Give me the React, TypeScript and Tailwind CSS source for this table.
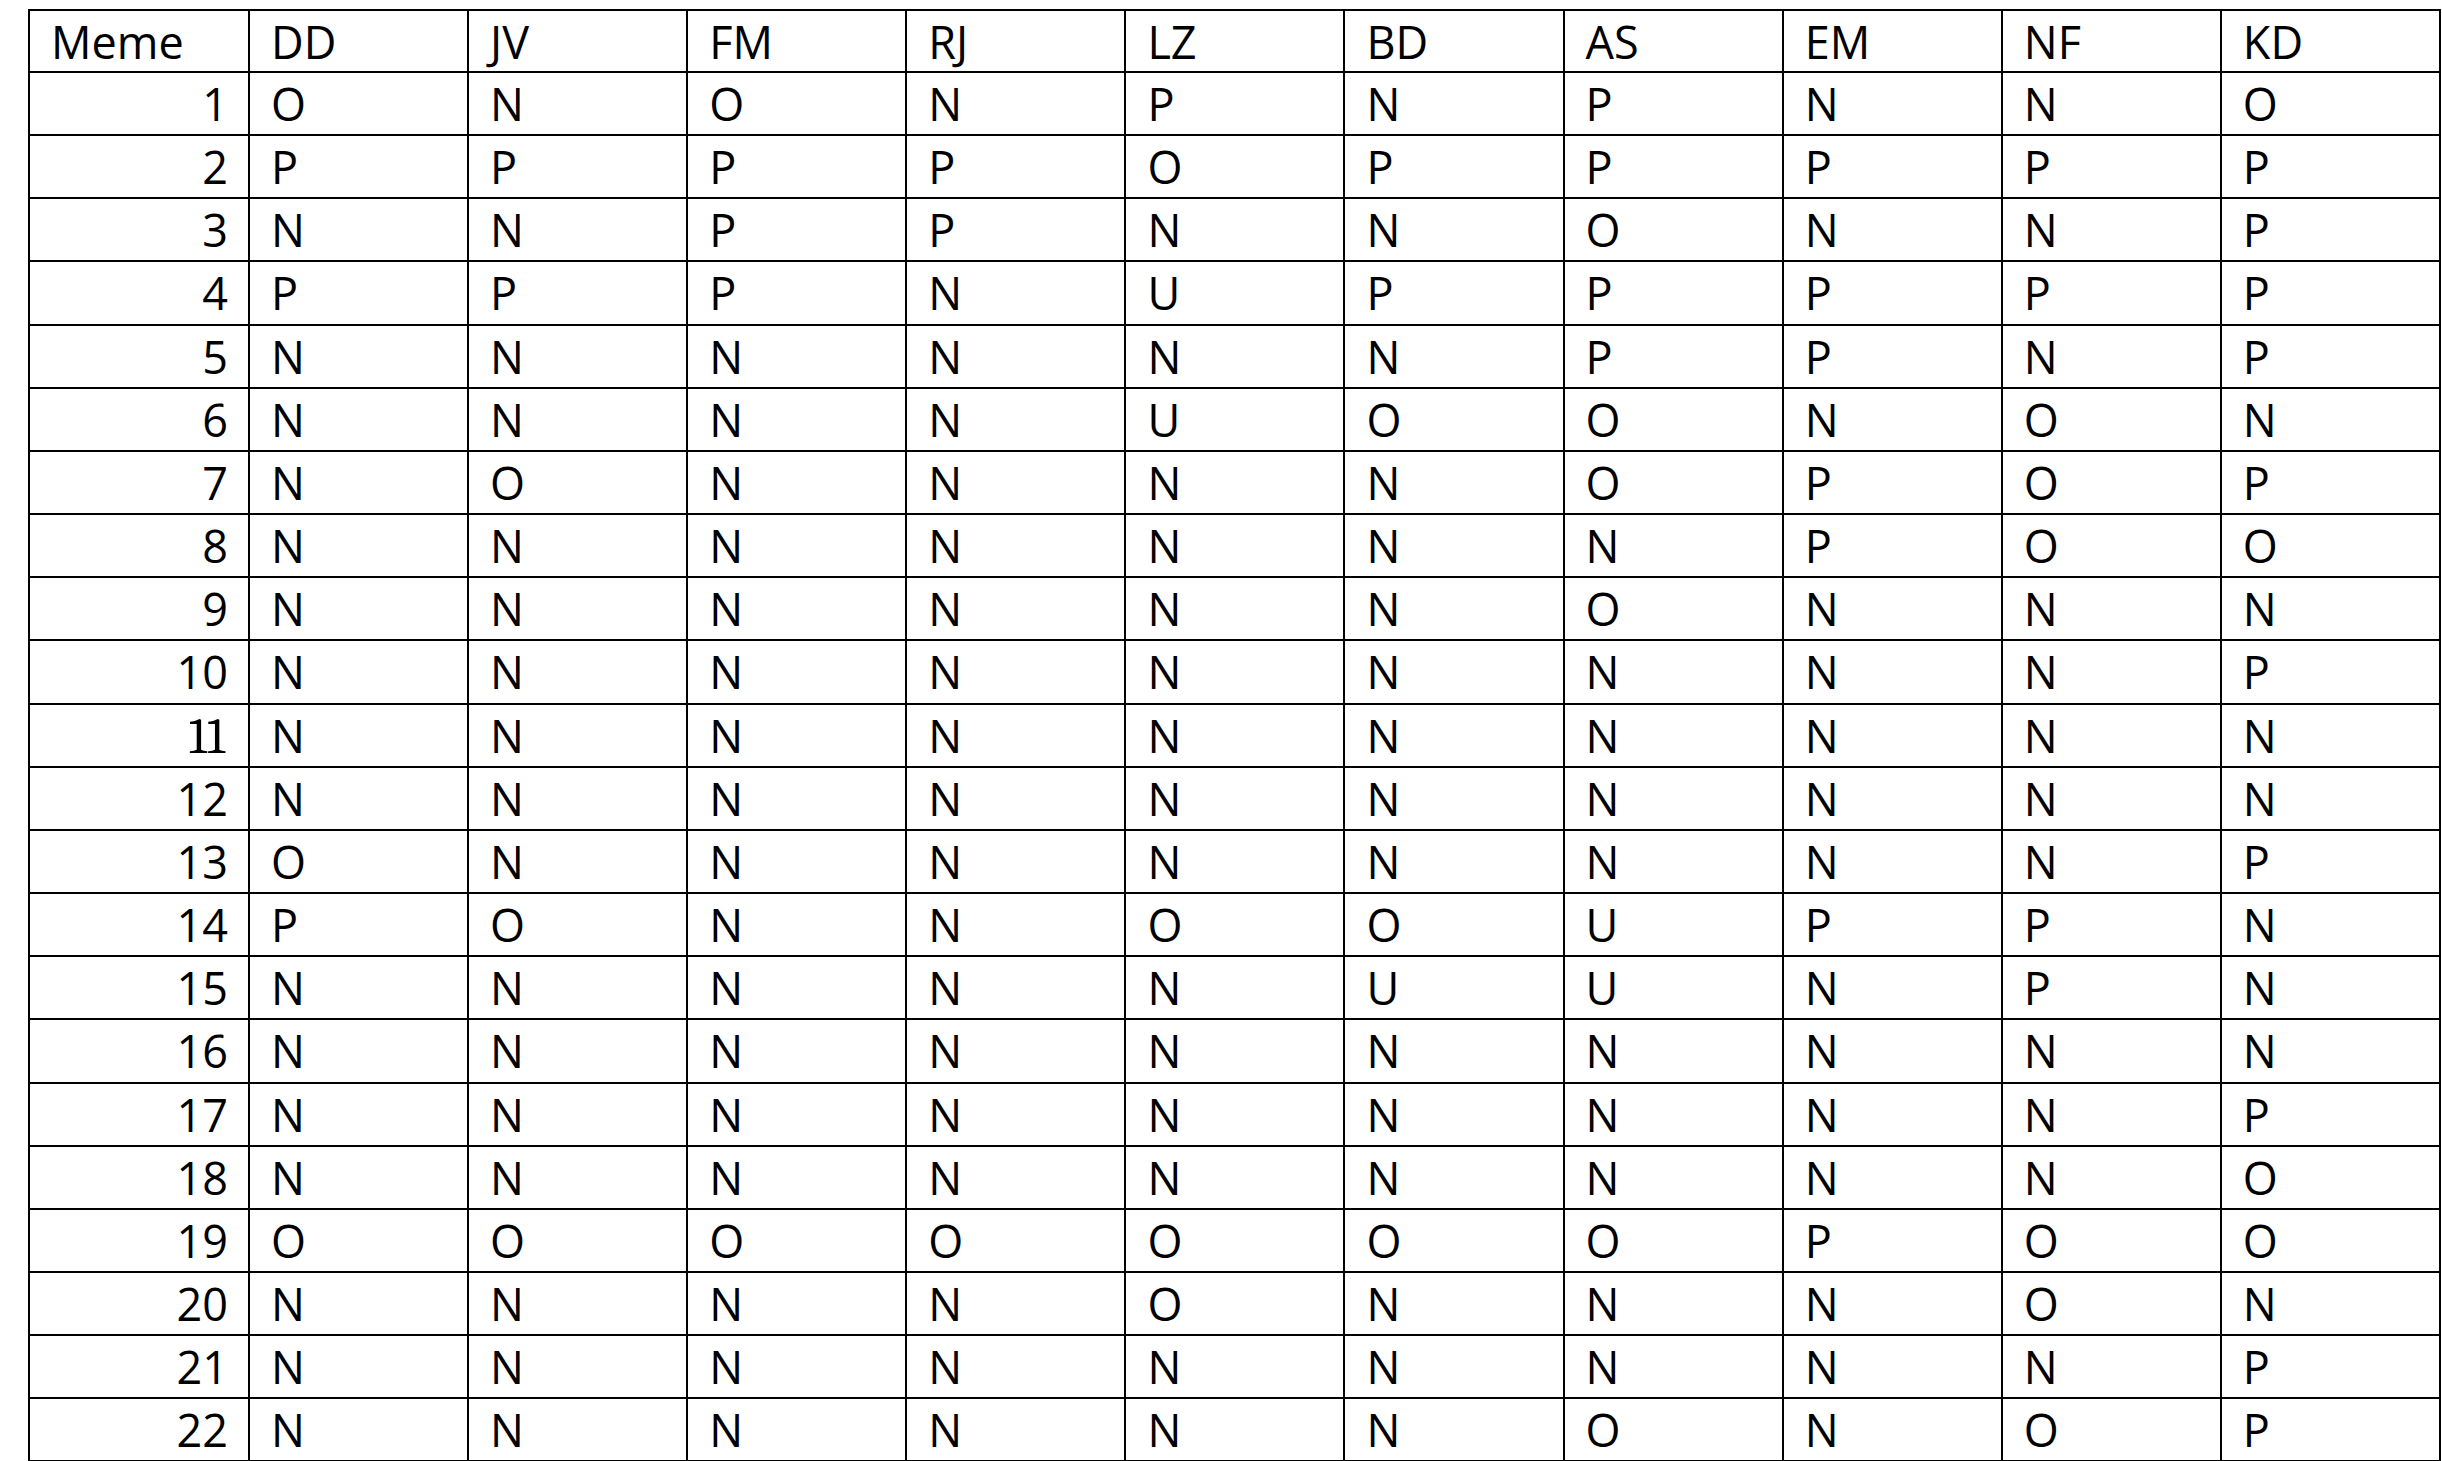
const headers = ['Meme', 'DD', 'JV', 'FM', 'RJ', 'LZ', 'BD', 'AS', 'EM', 'NF', 'KD'];

const rows: string[] = [
  'ONONPNPNNO',
  'PPPPOPPPPP',
  'NNPPNNONNP',
  'PPPNUPPPPP',
  'NNNNNNPPNP',
  'NNNNUOONON',
  'NONNNNOPOP',
  'NNNNNNNPOO',
  'NNNNNNONNN',
  'NNNNNNNNNP',
  'NNNNNNNNNN',
  'NNNNNNNNNN',
  'ONNNNNNNNP',
  'PONNOOUPPN',
  'NNNNNUUNPN',
  'NNNNNNNNNN',
  'NNNNNNNNNP',
  'NNNNNNNNNO',
  'OOOOOOOPOO',
  'NNNNONNNON',
  'NNNNNNNNNP',
  'NNNNNNONOP',
];

function RowNumber({ n }: { n: number }) {
  // row 11 is set in a serif face in the source doc
  if (n === 11) {
    return <span className="mr-[3px] font-serif text-[50px] [font-family:'Liberation_Serif','Times_New_Roman',serif]">11</span>;
  }
  return <span>{n}</span>;
}

export default function App() {
  return (
    <div className="h-[1461px] w-[2442px] overflow-hidden bg-white text-black [font-family:'Open_Sans',sans-serif]">
      <div className="ml-[28px] mt-[9px] w-max border-l-2 border-t-2 border-black">
        <div className="grid grid-cols-[220px_repeat(10,219.1px)] auto-rows-[63.16px] grid-rows-[62px]">
          {headers.map((h) => (
            <div key={h} className="border-r-2 border-b-2 border-black pl-[21px] pt-[8px] text-[45px] leading-[45px]">
              {h}
            </div>
          ))}
          {rows.map((r, i) => (
            <div key={i} className="contents">
              <div className="border-r-2 border-b-2 border-black pr-[20px] pt-[8px] text-right text-[45px] leading-[45px]">
                <RowNumber n={i + 1} />
              </div>
              {r.split('').map((v, j) => (
                <div key={j} className="border-r-2 border-b-2 border-black pl-[21px] pt-[8px] text-[45px] leading-[45px]">
                  {v}
                </div>
              ))}
            </div>
          ))}
        </div>
      </div>
    </div>
  );
}
